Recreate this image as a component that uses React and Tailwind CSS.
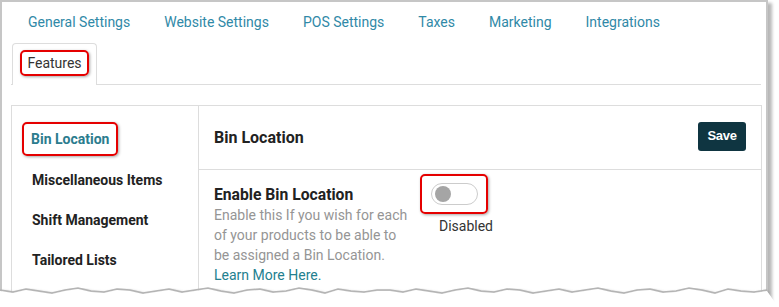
import React from "react";

const topTabs = [
	"General Settings",
	"Website Settings",
	"POS Settings",
	"Taxes",
	"Marketing",
	"Integrations",
];

const sideItems = ["Miscellaneous Items", "Shift Management", "Tailored Lists"];

// jagged "torn paper" edge along the bottom of the screenshot
const tornPoints = (() => {
	const ys = [6, 8, 5, 7, 9, 6, 4, 7, 8, 5, 6, 9, 7, 5, 8, 6, 4, 7, 9, 6, 5, 8, 7, 4, 6, 9, 5, 7, 8, 6];
	const pts = [];
	for (let x = 0, i = 0; x <= 776; x += 13, i++) {
		pts.push(`${x},${ys[i % ys.length]}`);
	}
	return pts.join(" ");
})();

const TornEdge = () => (
	<svg
		className="absolute left-0 top-[284px]"
		width="779"
		height="23"
		viewBox="0 0 779 23">
		<defs>
			<filter id="blur" x="-5%" y="-50%" width="110%" height="200%">
				<feGaussianBlur stdDeviation="1.6" />
			</filter>
		</defs>
		<polyline
			points={tornPoints}
			fill="none"
			stroke="#9a9a9a"
			strokeWidth="4"
			filter="url(#blur)"
			transform="translate(2,3)"
		/>
		<polygon points={`0,23 ${tornPoints} 779,23`} fill="#fff" transform="translate(0,2)" />
		<polyline points={tornPoints} fill="none" stroke="#b4b4b4" strokeWidth="1.5" />
		<polygon points={`0,23 ${tornPoints} 779,23`} fill="#fff" transform="translate(0,1)" />
	</svg>
);

const App = () => {
	return (
		<div className="relative w-[779px] h-[307px] bg-white overflow-hidden font-['Roboto',sans-serif]">
			<div className="w-[768px] h-[300px] border-2 border-b-0 border-[#c6c6c6] bg-white overflow-hidden shadow-[4px_3px_3px_rgba(0,0,0,0.28)]">
				{/* tabs */}
				<div className="ml-[9px] w-[750px] border-b border-[#dddddd]">
					<div className="flex h-[40px] items-center">
						{topTabs.map((t) => (
							<span key={t} className="px-[17px] text-[14px] text-[#3089a7]">
								{t}
							</span>
						))}
					</div>
					<div className="flex pl-[1px] pt-[1px]">
						<div className="-mb-px flex h-[42px] w-[85px] items-center justify-center rounded-t-[4px] border border-b-0 border-[#dddddd] bg-white pb-[3px]">
							<span className="rounded-[5px] border-2 border-[#e50000] px-[5px] py-[2px] text-[14px] leading-[18px] text-[#333] shadow-[1px_1px_3px_rgba(0,0,0,0.35)]">
								Features
							</span>
						</div>
					</div>
				</div>

				{/* panel */}
				<div className="ml-[9px] mt-[20px] flex h-[200px] w-[751px] border border-b-0 border-[#dddddd]">
					<div className="w-[187px] shrink-0 border-r border-[#dddddd] pl-[10px] pt-[14px]">
						<div className="flex h-[38px] items-center">
							<span className="rounded-[5px] border-2 border-[#e50000] px-[7px] py-[6px] text-[14px] font-bold leading-[18px] text-[#2b7c8e] shadow-[1px_1px_3px_rgba(0,0,0,0.35)]">
								Bin Location
							</span>
						</div>
						<div className="pt-[2px]">
							{sideItems.map((s) => (
								<div key={s} className="flex h-[40px] items-center pl-[10px] text-[14px] font-bold text-[#222]">
									{s}
								</div>
							))}
						</div>
					</div>
					<div className="flex-1">
						<div className="flex h-[64px] items-center justify-between border-b border-[#dddddd] pl-[15px] pr-[15px]">
							<span className="text-[16px] font-bold text-[#222]">Bin Location</span>
							<button className="-mt-[3px] h-[29px] w-[48px] rounded-[3px] bg-[#0f3541] text-[13px] font-bold text-white font-['Liberation_Sans',sans-serif] tracking-[-0.3px]">
								Save
							</button>
						</div>
						<div className="flex pl-[15px] pt-[15px]">
							<div className="w-[200px] text-[14px] leading-[20px]">
								<div className="text-[15.7px] font-bold text-[#222]">Enable Bin Location</div>
								<div className="text-[#959595]">
									Enable this If you wish for each of your products to be able to be assigned a Bin Location.
								</div>
								<div className="text-[#23808f]">Learn More Here.</div>
							</div>
							<div className="ml-[6px] -mt-[11px] flex flex-col items-start">
								<div className="flex h-[40px] w-[68px] items-center justify-center rounded-[5px] border-2 border-[#e50000] shadow-[1px_1px_3px_rgba(0,0,0,0.35)]">
									<div className="flex h-[22px] w-[47px] items-center rounded-full border border-[#cccccc] bg-white pl-[3px]">
										<div className="h-[16px] w-[16px] rounded-full bg-[#a5a5a5]" />
									</div>
								</div>
								<span className="ml-[19px] mt-[2px] text-[14px] text-[#333]">Disabled</span>
							</div>
						</div>
					</div>
				</div>
			</div>
			<TornEdge />
		</div>
	);
};

export default App;
